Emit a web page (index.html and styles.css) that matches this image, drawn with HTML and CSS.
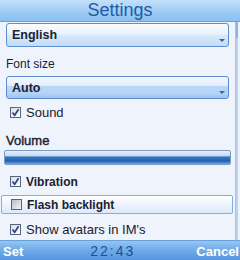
FILE: index.html
```html
<!DOCTYPE html>
<html>
<head lang="en">
    <meta charset="UTF-8">
    <title>Settings</title>
    <link rel="stylesheet" href="styles.css">
</head>
<body>
<div id="phone">
    <div class="title">Settings</div>
    <div class="content">
        <div class="select">
            <span>English</span>
            <i class="arrow"></i>
        </div>
        <div class="label">Font size</div>
        <div class="select focus">
            <span>Auto</span>
            <i class="arrow"></i>
        </div>
        <div class="check row-sound">
            <span class="box on"><svg width="9" height="9" viewBox="0 0 9 9"><path d="M1.5 4.5 L3.6 7.2 L7.6 1.2" fill="none" stroke="#33407a" stroke-width="1.7"/></svg></span>
            <span class="text">Sound</span>
        </div>
        <div class="label strong">Volume</div>
        <div class="volume"></div>
        <div class="check row-vib">
            <span class="box on"><svg width="9" height="9" viewBox="0 0 9 9"><path d="M1.5 4.5 L3.6 7.2 L7.6 1.2" fill="none" stroke="#33407a" stroke-width="1.7"/></svg></span>
            <span class="text bold">Vibration</span>
        </div>
        <div class="check row-flash">
            <span class="box off"></span>
            <span class="text bold">Flash backlight</span>
        </div>
        <div class="check row-avatar">
            <span class="box on"><svg width="9" height="9" viewBox="0 0 9 9"><path d="M1.5 4.5 L3.6 7.2 L7.6 1.2" fill="none" stroke="#33407a" stroke-width="1.7"/></svg></span>
            <span class="text">Show avatars in IM's</span>
        </div>
        <div class="scroll"><div class="thumb"></div></div>
    </div>
    <div class="softkeys">
        <span class="key">Set</span>
        <span class="clock">22:43</span>
        <span class="key">Cancel</span>
    </div>
</div>
</body>
</html>
```

FILE: styles.css
```css
* {
    margin: 0;
    padding: 0;
    box-sizing: border-box;
}
body {
    width: 240px;
    height: 260px;
    overflow: hidden;
    font-family: "Liberation Sans", Arial, sans-serif;
    color: #1b2130;
}
#phone {
    width: 240px;
    height: 260px;
    display: flex;
    flex-direction: column;
    background: #eef3fc;
}
.title {
    height: 22px;
    line-height: 20px;
    text-align: center;
    font-size: 18px;
    color: #1d5ca6;
    background: linear-gradient(#c4e0fa, #9ccaf4 60%, #8ac0f0);
    border-bottom: 1px solid #6c9fd8;
}
.content {
    flex: 1;
    position: relative;
    padding-top: 1px;
}
.select {
    margin: 0 11px 0 6px;
    height: 24px;
    border: 1px solid #5d8fd0;
    border-radius: 3px;
    display: flex;
    align-items: center;
    padding-left: 5px;
    font-size: 12.5px;
    font-weight: bold;
    position: relative;
    background: linear-gradient(#fafcff, #eaf2fd 45%, #d6e7fa 55%, #c4dcf7);
}
.select.focus {
    height: 23px;
    background: linear-gradient(#f2f7fe, #e4eefc 40%, #bcd8f8 45%, #b2d2f6 80%, #9ec4f0);
}
.arrow {
    position: absolute;
    right: 3px;
    bottom: 4px;
    width: 0;
    height: 0;
    border-left: 3px solid transparent;
    border-right: 3px solid transparent;
    border-top: 3px solid #3466ae;
}
.label {
    height: 29px;
    padding: 10px 0 0 6px;
    font-size: 12px;
    line-height: 15px;
}
.label.strong {
    height: 24px;
    padding-top: 7px;
    font-size: 13px;
    -webkit-text-stroke: 0.4px #1b2130;
}
.check {
    display: flex;
    align-items: center;
    padding-left: 10px;
    font-size: 13px;
}
.row-sound {
    height: 27px;
}
.row-vib {
    height: 27px;
    margin-top: 3px;
}
.row-flash {
    height: 19px;
    margin: 0 7px 0 1px;
    padding-left: 9px;
    border: 1px solid #88acdc;
    border-radius: 2px;
    background: linear-gradient(#ffffff, #eef4fd 50%, #dce9fa);
}
.row-avatar {
    height: 22px;
    margin-top: 4px;
}
.box {
    width: 11px;
    height: 11px;
    border: 1px solid #56657e;
    display: flex;
    align-items: center;
    justify-content: center;
    background: linear-gradient(135deg, #d8dde6, #ffffff);
}
.box.off {
    background: linear-gradient(135deg, #b8bcc4, #f4f5f8);
}
.text {
    margin-left: 5px;
}
.bold {
    font-weight: bold;
    font-size: 12px;
}
.volume {
    height: 15px;
    margin: 0 9px 0 4px;
    border: 1px solid #7c9cc6;
    border-radius: 2px;
    background: linear-gradient(#e8f0fa, #c4d8ee 38%, #3a78c0 45%, #2262b2 75%, #4a82c4 90%, #8cb0dc);
}
.scroll {
    position: absolute;
    top: 0;
    bottom: 0;
    right: 2px;
    width: 3px;
    background: #bed3ef;
    border-left: 1px solid #a8c2e8;
}
.thumb {
    height: 16px;
    background: #8cb2e6;
}
.softkeys {
    height: 20px;
    display: flex;
    justify-content: space-between;
    align-items: center;
    padding: 1px 1px 0 3px;
    background: linear-gradient(#94c6f2, #6eaae8 50%, #5596de);
    border-top: 1px solid #6aa0dc;
}
.key {
    color: #ffffff;
    font-size: 13px;
    font-weight: bold;
}
.clock {
    color: #1d4f98;
    font-size: 14px;
    letter-spacing: 2px;
    margin-left: 6px;
}
```
